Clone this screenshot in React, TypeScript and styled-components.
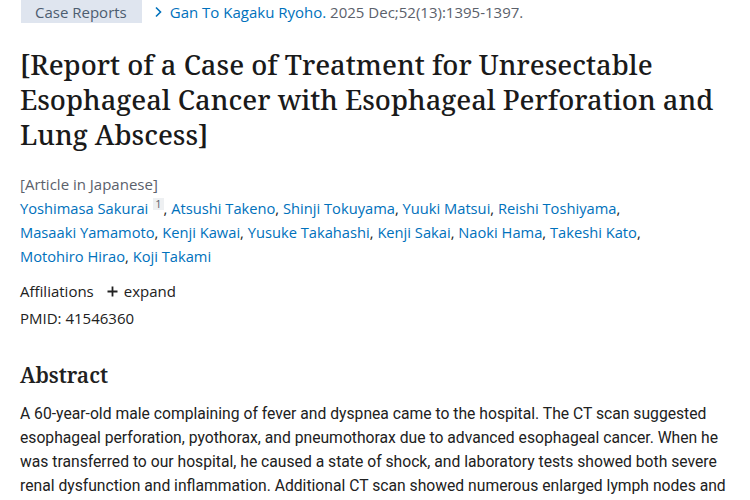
import React from "react";
import styled, { createGlobalStyle } from "styled-components";

const GlobalStyle = createGlobalStyle`
  body {
    margin: 0;
    background: #ffffff;
    color: #212121;
    font-family: "Open Sans", "Noto Sans", sans-serif;
    font-stretch: 94%;
  }
`;

const Page = styled.main`
  padding: 0 20px;
  display: flex;
  flex-direction: column;
`;

const HeaderRow = styled.div`
  display: flex;
  align-items: center;
  gap: 11px;
  height: 23px;
`;

const Badge = styled.span`
  display: flex;
  align-items: center;
  height: 23px;
  padding: 0 15px 0 14px;
  white-space: nowrap;
  background: #dfe5ef;
  color: #4d5d70;
  font-size: 15px;
  margin-left: 1px;
`;

const Citation = styled.span`
  display: flex;
  align-items: center;
  gap: 7px;
  font-size: 15px;
  white-space: nowrap;
  color: #5b616b;
`;

const Link = styled.a`
  color: #0071bc;
  text-decoration: none;
`;

const Title = styled.h1`
  margin: 24px 0 0;
  font-family: "Noto Serif", "DejaVu Serif", serif;
  font-stretch: normal;
  font-weight: 500;
  font-size: 27.4px;
  line-height: 35px;
  color: #1a1a1a;
`;

const Lang = styled.div`
  margin-top: 20px;
  font-size: 15px;
  line-height: 24px;
  color: #5b616b;
`;

const Authors = styled.div`
  max-width: 660px;
  font-size: 14.7px;
  line-height: 24px;
  color: #212121;
`;

const Sup = styled.sup`
  display: inline-block;
  font-size: 11px;
  line-height: 12px;
  padding: 0 2px;
  margin: 0 0 0 5px;
  background: #eef0f2;
  color: #5b616b;
  vertical-align: 6px;
`;

const Affil = styled.div`
  margin-top: 11px;
  display: flex;
  align-items: center;
  font-size: 15px;
  line-height: 24px;
  color: #212121;
`;

const Expand = styled.span`
  display: inline-flex;
  align-items: center;
  gap: 6px;
  margin-left: 13px;
`;

const Pmid = styled.div`
  margin-top: 3px;
  font-size: 15px;
  line-height: 24px;
`;

const AbstractHead = styled.h2`
  margin: 30px 0 0;
  font-family: "Noto Serif", "DejaVu Serif", serif;
  font-stretch: normal;
  font-weight: 600;
  font-size: 21px;
  line-height: 30px;
  color: #212121;
`;

const AbstractText = styled.p`
  margin: 12px 0 0;
  font-family: Roboto, "Open Sans", sans-serif;
  font-stretch: normal;
  font-size: 15.7px;
  line-height: 24px;
  color: #212121;
`;

const authors = [
  "Atsushi Takeno",
  "Shinji Tokuyama",
  "Yuuki Matsui",
  "Reishi Toshiyama",
  "Masaaki Yamamoto",
  "Kenji Kawai",
  "Yusuke Takahashi",
  "Kenji Sakai",
  "Naoki Hama",
  "Takeshi Kato",
  "Motohiro Hirao",
  "Koji Takami",
];

function Chevron() {
  return (
    <svg width="10" height="12" viewBox="0 0 10 12" fill="none">
      <path d="M3 1.5 L7.5 6 L3 10.5" stroke="#0071bc" strokeWidth="1.6" />
    </svg>
  );
}

function Plus() {
  return (
    <svg width="11" height="11" viewBox="0 0 11 11">
      <path d="M5.5 0.5 V10.5 M0.5 5.5 H10.5" stroke="#212121" strokeWidth="1.8" />
    </svg>
  );
}

export default function App() {
  return (
    <>
      <GlobalStyle />
      <Page>
        <HeaderRow>
          <Badge>Case Reports</Badge>
          <Citation>
            <Chevron />
            <span>
              <Link href="#">Gan To Kagaku Ryoho.</Link> 2025 Dec;52(13):1395-1397.
            </span>
          </Citation>
        </HeaderRow>
        <Title>
          [Report of a Case of Treatment for Unresectable Esophageal Cancer with Esophageal
          Perforation and Lung Abscess]
        </Title>
        <Lang>[Article in Japanese]</Lang>
        <Authors>
          <Link href="#">Yoshimasa Sakurai</Link>
          <Sup>1</Sup>
          {authors.map((a) => (
            <React.Fragment key={a}>
              , <Link href="#">{a}</Link>
            </React.Fragment>
          ))}
        </Authors>
        <Affil>
          Affiliations
          <Expand>
            <Plus />
            expand
          </Expand>
        </Affil>
        <Pmid>PMID: 41546360</Pmid>
        <AbstractHead>Abstract</AbstractHead>
        <AbstractText>
          A 60-year-old male complaining of fever and dyspnea came to the hospital. The CT scan
          suggested esophageal perforation, pyothorax, and pneumothorax due to advanced esophageal
          cancer. When he was transferred to our hospital, he caused a state of shock, and
          laboratory tests showed both severe renal dysfunction and inflammation. Additional CT
          scan showed numerous enlarged lymph nodes and lung abscess.
        </AbstractText>
      </Page>
    </>
  );
}
